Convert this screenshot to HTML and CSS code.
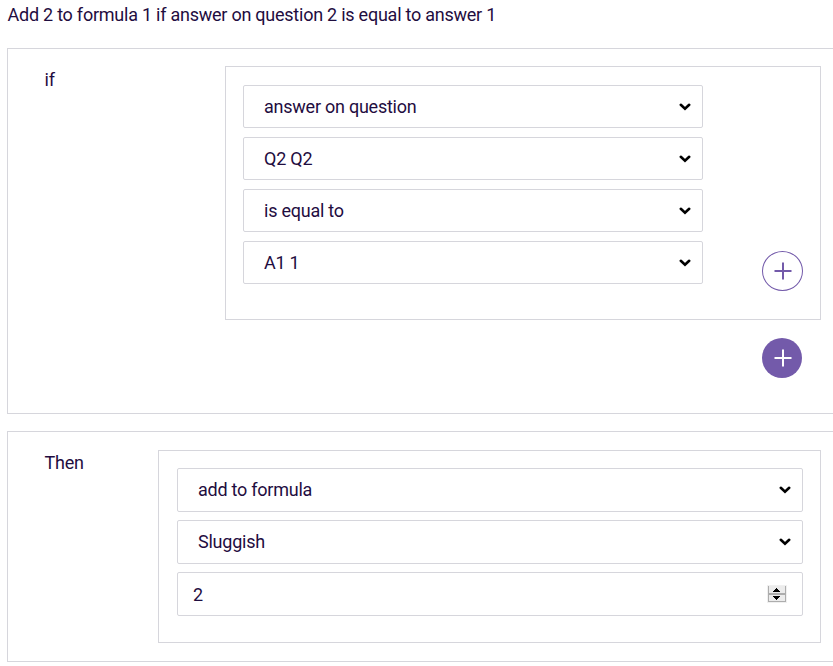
FILE: index.html
```html
<!DOCTYPE html>
<html lang="en">

<head>
    <meta charset="UTF-8">
    <meta name="viewport" content="width=device-width, initial-scale=1.0">
    <title>Formula rules</title>
    <link rel="stylesheet" href="styles.css">
</head>

<body>
    <p class="summary">Add 2 to formula 1 if answer on question 2 is equal to answer 1</p>

    <form class="rule">
        <section class="block block-if">
            <span class="block-label">if</span>
            <div class="block-content">
                <div class="group">
                    <div class="fields">
                        <div class="select">
                            <select name="source"><option>answer on question</option></select>
                            <svg class="arrow" viewBox="0 0 12 8"><path d="M1.8 1.8L6 5.7L10.2 1.8"/></svg>
                        </div>
                        <div class="select">
                            <select name="question"><option>Q2 Q2</option></select>
                            <svg class="arrow" viewBox="0 0 12 8"><path d="M1.8 1.8L6 5.7L10.2 1.8"/></svg>
                        </div>
                        <div class="select">
                            <select name="operator"><option>is equal to</option></select>
                            <svg class="arrow" viewBox="0 0 12 8"><path d="M1.8 1.8L6 5.7L10.2 1.8"/></svg>
                        </div>
                        <div class="select">
                            <select name="answer"><option>A1 1</option></select>
                            <svg class="arrow" viewBox="0 0 12 8"><path d="M1.8 1.8L6 5.7L10.2 1.8"/></svg>
                        </div>
                    </div>
                    <button type="button" class="add add-outline" aria-label="Add condition">
                        <svg viewBox="0 0 18 18"><path d="M9 0.5V17.5M0.5 9H17.5"/></svg>
                    </button>
                </div>
                <button type="button" class="add add-filled" aria-label="Add group">
                    <svg viewBox="0 0 18 18"><path d="M9 0.5V17.5M0.5 9H17.5"/></svg>
                </button>
            </div>
        </section>

        <section class="block block-then">
            <span class="block-label">Then</span>
            <div class="group">
                <div class="select">
                    <select name="action"><option>add to formula</option></select>
                    <svg class="arrow" viewBox="0 0 12 8"><path d="M1.8 1.8L6 5.7L10.2 1.8"/></svg>
                </div>
                <div class="select">
                    <select name="formula"><option>Sluggish</option></select>
                    <svg class="arrow" viewBox="0 0 12 8"><path d="M1.8 1.8L6 5.7L10.2 1.8"/></svg>
                </div>
                <div class="number">
                    <input type="text" inputmode="numeric" name="value" value="2">
                    <svg class="spinner" viewBox="0 0 20 18" shape-rendering="crispEdges">
                        <rect width="20" height="18" fill="#f0f0f0"/>
                        <path d="M1.5 1V16.5H18.5V1" fill="#ececec" stroke="#adadad"/>
                        <rect x="1" y="8" width="18" height="2" fill="#adadad"/>
                        <path d="M9 3h1v1h1v1h1v1h1v1H6V6h1V5h1V4h1z"/>
                        <path d="M6 11h7v1h-1v1h-1v1h-1v1H9v-1H8v-1H7v-1H6z"/>
                    </svg>
                </div>
            </div>
        </section>
    </form>
</body>

</html>
```

FILE: styles.css
```css
* {
    box-sizing: border-box;
}

body {
    font-family: Roboto, sans-serif;
    font-size: 18px;
    line-height: 28px;
    letter-spacing: -0.24px;
    color: #1f0d3f;
    background-color: #fff;
    margin: 0;
    overflow: hidden;
}

.summary {
    height: 48px;
    margin: 0;
    padding: 1px 0 0 7.5px;
}

.rule {
    width: 832px;
    margin-left: 7px;
}

.block {
    display: flex;
    border: 1px solid #d6d6dc;
    padding: 17px 17px 0 36.5px;
}

.block-if {
    height: 366px;
    margin-bottom: 17px;
}

.block-then {
    height: 231px;
    padding-top: 18px;
}

.block-label {
    flex: none;
    height: 28px;
}

.block-if .block-label {
    width: 180.5px;
}

.block-then .block-label {
    width: 113.5px;
    margin-top: -1px;
}

.group {
    border: 1px solid #d6d6dc;
}

.block-if .group {
    display: flex;
    justify-content: space-between;
    align-items: flex-end;
    width: 596px;
    height: 254px;
    padding: 18px 17px 28px 17px;
}

.block-then .group {
    display: flex;
    flex-direction: column;
    gap: 8px;
    width: 663px;
    height: 193px;
    padding: 17px 17px 0 18px;
}

.fields {
    display: flex;
    flex-direction: column;
    align-self: flex-start;
    gap: 9px;
    width: 460px;
}

.select {
    display: grid;
    height: 43px;
}

.select select,
.select .arrow {
    grid-area: 1 / 1;
}

.block-then .select,
.number {
    height: 44px;
}

select,
input {
    width: 100%;
    height: 100%;
    margin: 0;
    padding: 0 20px;
    font: inherit;
    letter-spacing: inherit;
    color: inherit;
    background-color: #fff;
    border: 1px solid #d6d6dc;
    border-radius: 2px;
    appearance: none;
}

input {
    padding: 0 15px;
}

.arrow {
    width: 12px;
    height: 8px;
    align-self: center;
    justify-self: end;
    margin-right: 12.5px;
    fill: none;
    stroke: #000;
    stroke-width: 2.6;
    stroke-linecap: round;
    pointer-events: none;
}

.number {
    display: grid;
}

.number input,
.number .spinner {
    grid-area: 1 / 1;
}

.spinner {
    width: 20px;
    height: 18px;
    align-self: center;
    justify-self: end;
    margin-right: 16px;
}

.add {
    display: flex;
    align-items: center;
    justify-content: center;
    width: 40px;
    height: 40px;
    padding: 0;
    border: none;
    border-radius: 50%;
    cursor: pointer;
}

.add svg {
    width: 18px;
    height: 18px;
    fill: none;
    stroke: currentColor;
    stroke-width: 2;
}

.add-outline {
    width: 41px;
    color: #735aaa;
    background-color: #fff;
    border: 1px solid #735aaa;
}

.add-filled {
    color: #fff;
    background-color: #735aaa;
    margin: 18px 0 0 537px;
    padding-left: 1px;
}
```
